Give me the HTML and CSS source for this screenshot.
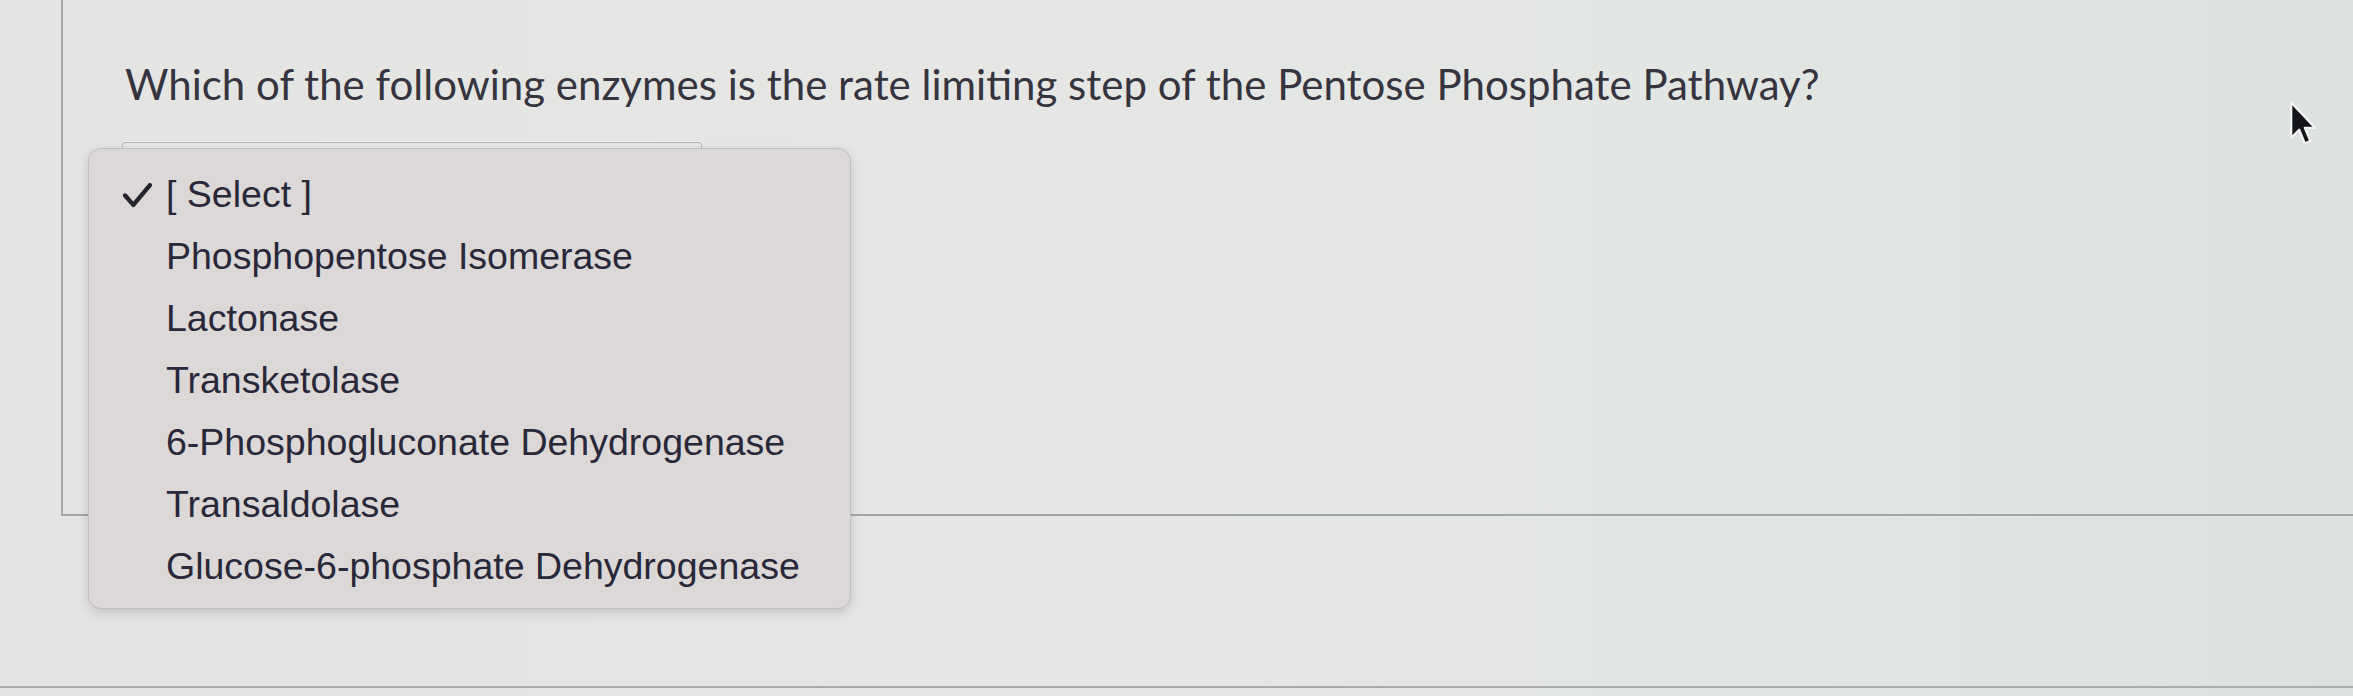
FILE: index.html
```html
<!DOCTYPE html>
<html lang="en">
<head>
    <meta charset="UTF-8">
    <meta name="viewport" content="width=device-width, initial-scale=1.0">
    <title>Quiz Question</title>
    <link rel="stylesheet" href="styles.css">
</head>
<body>
    <div class="screen">
        <div class="row">
            <div class="gutter"></div>
            <div class="question">
                <h1 class="question-text">Which of the following enzymes is the rate limiting step of the Pentose Phosphate Pathway?</h1>

                <div class="select-wrap">
                    <div class="select-box"></div>

                    <!-- open native dropdown -->
                    <ul class="dropdown">
                        <li class="option selected">
                            <svg class="check" viewBox="0 0 28 24" width="29" height="25">
                                <polyline points="2,12 10,21 26,2" fill="none" stroke="#25232e" stroke-width="4.2" stroke-linecap="round" stroke-linejoin="round"/>
                            </svg>
                            [ Select ]
                        </li>
                        <li class="option">Phosphopentose Isomerase</li>
                        <li class="option">Lactonase</li>
                        <li class="option">Transketolase</li>
                        <li class="option">6-Phosphogluconate Dehydrogenase</li>
                        <li class="option">Transaldolase</li>
                        <li class="option">Glucose-6-phosphate Dehydrogenase</li>
                    </ul>
                </div>
            </div>
        </div>
        <div class="below"></div>

        <svg class="cursor" viewBox="0 0 20 30" width="32" height="48">
            <path d="M2 1 L2 23 L7 18 L10.5 26.5 L14 25 L10.5 16.8 L17 16.8 Z" fill="#15151c" stroke="#f4f4f4" stroke-width="1.4" stroke-linejoin="round"/>
        </svg>
    </div>
</body>
</html>
```

FILE: styles.css
```css
body {
    margin: 0;
    padding: 0;
    background-color: #e3e5e2;
    font-family: Lato, "Open Sans", sans-serif;
}
.screen {
    position: relative;
    width: 2353px;
    height: 696px;
    overflow: hidden;
    background: linear-gradient(90deg, #e4e5e2 0%, #e6e7e4 45%, #e2e6e3 75%, #dce2e0 100%);
    display: flex;
    flex-direction: column;
}
.row {
    display: flex;
    height: 516px;
    flex-shrink: 0;
}
.gutter {
    width: 61px;
    flex-shrink: 0;
}
.question {
    flex: 1;
    border-left: 2px solid #a7a9a9;
    border-bottom: 2px solid #a3a6a6;
    padding-left: 62px;
}
.question-text {
    margin: 0;
    padding-top: 59px;
    font-size: 42px;
    font-weight: 400;
    line-height: 1.2;
    color: #35343f;
}
.select-wrap {
    position: relative;
    margin-top: 33px;
    margin-left: -3px;
    width: 580px;
}
.select-box {
    height: 56px;
    border: 1px solid #b7b9b9;
    border-top-color: #aeb0b0;
    border-radius: 4px;
    background-color: #e8e9e7;
    box-shadow: 0 -1px 0 #f3f4f2;
}
.dropdown {
    position: absolute;
    left: -34px;
    top: 6px;
    width: 761px;
    margin: 0;
    padding: 14px 0 11px 0;
    list-style: none;
    background-color: #dcd8d7;
    border: 1px solid #c2bebe;
    border-radius: 13px;
    box-shadow: 0 4px 12px rgba(0, 0, 0, 0.14);
}
.option {
    position: relative;
    height: 62px;
    line-height: 62px;
    padding-left: 77px;
    font-family: "Liberation Sans", Arial, sans-serif;
    font-size: 37.5px;
    color: #29273a;
    white-space: nowrap;
}
.check {
    position: absolute;
    left: 34px;
    top: 20px;
}
.below {
    height: 170px;
    flex-shrink: 0;
    border-bottom: 2px solid #a9acab;
}
.cursor {
    position: absolute;
    left: 2288px;
    top: 101px;
}
```
